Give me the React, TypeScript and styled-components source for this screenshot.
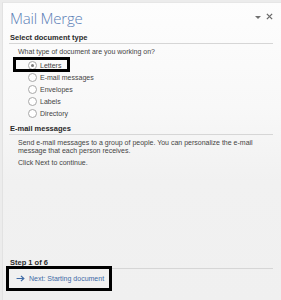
import React from "react"
import styled, { createGlobalStyle } from "styled-components"

const GlobalStyle = createGlobalStyle`
    html, body {
        margin: 0;
        padding: 0;
        background: #ececec;
    }
    body {
        font-family: "Liberation Sans", Arial, sans-serif;
    }
`

const options = ["Letters", "E-mail messages", "Envelopes", "Labels", "Directory"]

export default function App() {
    return (
        <>
            <GlobalStyle />
            <Frame>
                <Pane>
                    <Header>
                        <Title>Mail Merge</Title>
                        <HeaderIcons>
                            <MenuArrow />
                            <CloseIcon viewBox="0 0 8 8">
                                <path d="M1 1 L7 7 M7 1 L1 7" />
                            </CloseIcon>
                        </HeaderIcons>
                    </Header>

                    <Section>
                        <SectionTitle>Select document type</SectionTitle>
                        <Question>What type of document are you working on?</Question>
                        <OptionList>
                            {options.map((label, i) => (
                                <Option key={label} $highlight={i === 0}>
                                    <Radio $checked={i === 0} />
                                    <OptionLabel>{label}</OptionLabel>
                                </Option>
                            ))}
                        </OptionList>
                    </Section>

                    <Section>
                        <SectionTitle>E-mail messages</SectionTitle>
                        <Body>
                            <p>
                                Send e-mail messages to a group of people. You can
                                personalize the e-mail message that each person
                                receives.
                            </p>
                            <p>Click Next to continue.</p>
                        </Body>
                    </Section>

                    <Spacer />

                    <Footer>
                        <SectionTitle>Step 1 of 6</SectionTitle>
                        <NextLink>
                            <ArrowIcon viewBox="0 0 10 8">
                                <path d="M0.5 4 H8.5 M5.5 1 L8.8 4 L5.5 7" />
                            </ArrowIcon>
                            Next: Starting document
                        </NextLink>
                    </Footer>
                </Pane>
            </Frame>
        </>
    )
}

const Frame = styled.div`
    width: 281px;
    height: 300px;
    padding: 2px 0 0 2px;
    box-sizing: border-box;
    background: #ececec;
`

const Pane = styled.div`
    height: 100%;
    display: flex;
    flex-direction: column;
    box-sizing: border-box;
    border-left: 1px solid #e2e2e2;
    border-top: 1px solid #e6e6e6;
    padding: 0 8px 0 6px;
    background: linear-gradient(#fdfdfd 0%, #f8f8f8 35%, #f1f1f1 60%, #f0f0f0 100%);
`

const Header = styled.div`
    display: flex;
    align-items: center;
    justify-content: space-between;
    height: 30px;
`

const Title = styled.div`
    font-family: "Open Sans", "Liberation Sans", sans-serif;
    font-weight: 300;
    font-size: 15px;
    color: #5a7db6;
    letter-spacing: -0.2px;
    padding-left: 1px;
`

const HeaderIcons = styled.div`
    display: flex;
    align-items: center;
    gap: 5px;
    margin-top: -3px;
`

const MenuArrow = styled.span`
    width: 0;
    height: 0;
    border-left: 3px solid transparent;
    border-right: 3px solid transparent;
    border-top: 3px solid #707070;
    margin-top: 1px;
`

const CloseIcon = styled.svg`
    width: 7px;
    height: 7px;
    stroke: #6a6a6a;
    stroke-width: 1.5;
    fill: none;
`

const Section = styled.div`
    display: flex;
    flex-direction: column;
`

const SectionTitle = styled.div`
    font-size: 7.5px;
    font-weight: bold;
    color: #2a2a2a;
    padding: 0 0 1px 1px;
    border-bottom: 1px solid #d6d6d6;
    line-height: 9px;
`

const Question = styled.div`
    font-size: 7px;
    color: #444;
    padding: 3px 0 0 9px;
    line-height: 9px;
`

const OptionList = styled.div`
    display: flex;
    flex-direction: column;
    padding: 3px 0 5px 19px;
`

const Option = styled.div<{ $highlight?: boolean }>`
    position: relative;
    display: flex;
    align-items: center;
    gap: 3px;
    height: 12px;

    ${(p) =>
        p.$highlight &&
        `
        &::before {
            content: "";
            position: absolute;
            top: -2px;
            bottom: -1px;
            left: -15px;
            width: 51px;
            border: 3px solid #000;
        }
    `}
`

const Radio = styled.span<{ $checked?: boolean }>`
    width: 7px;
    height: 7px;
    border-radius: 50%;
    border: 1px solid #a8a8a8;
    background: #fff;
    display: flex;
    align-items: center;
    justify-content: center;

    &::after {
        content: "";
        width: 3px;
        height: 3px;
        border-radius: 50%;
        background: ${(p) => (p.$checked ? "#7a7a7a" : "transparent")};
    }
`

const OptionLabel = styled.span`
    font-size: 7px;
    color: #444;
`

const Body = styled.div`
    font-size: 7px;
    color: #444;
    line-height: 8px;
    padding: 4px 16px 0 9px;

    p {
        margin: 0 0 4px;
    }
`

const Spacer = styled.div`
    flex: 1;
`

const Footer = styled.div`
    display: flex;
    flex-direction: column;
    padding-bottom: 9px;
`

const NextLink = styled.div`
    align-self: flex-start;
    display: flex;
    align-items: center;
    gap: 4px;
    margin: -3px 0 0 -3px;
    padding: 5px 5px 5px 7px;
    border: 3px solid #000;
    font-size: 7px;
    line-height: 9px;
    color: #3e6aa6;
`

const ArrowIcon = styled.svg`
    width: 9px;
    height: 7px;
    stroke: #3e6aa6;
    stroke-width: 1.4;
    fill: none;
`
